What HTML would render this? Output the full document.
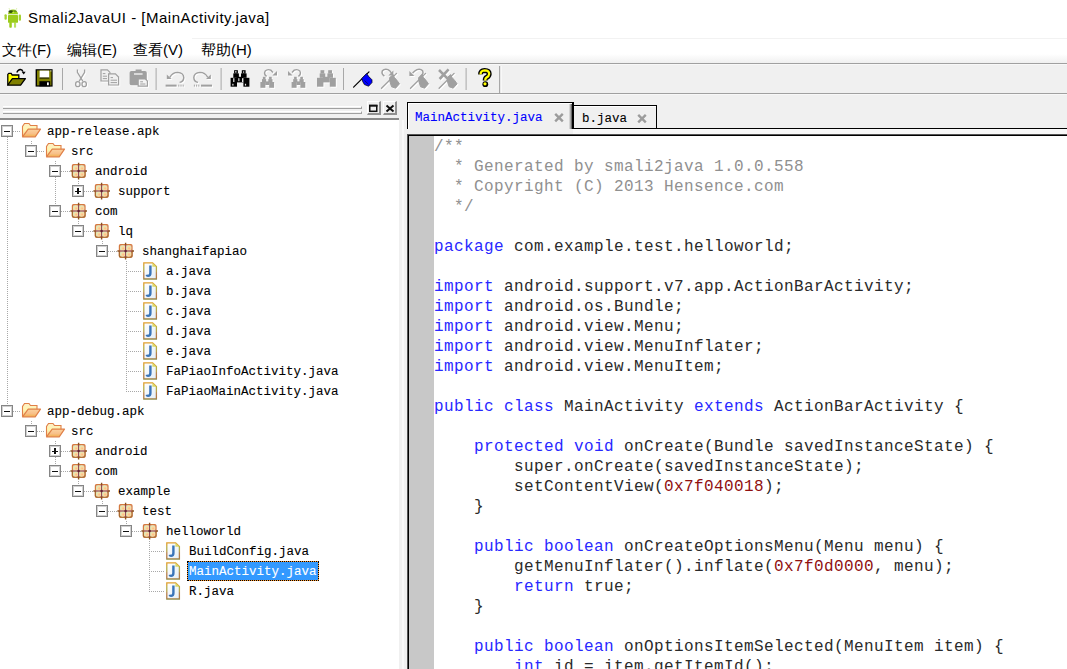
<!DOCTYPE html>
<html><head><meta charset="utf-8">
<style>
*{margin:0;padding:0;box-sizing:border-box}
html,body{width:1067px;height:669px;overflow:hidden;background:#fff;font-family:"Liberation Sans",sans-serif;position:relative}
.abs{position:absolute}
#title{left:0;top:0;width:1067px;height:38px;background:#fff}
#title .t{left:28px;top:9px;font-size:15px;letter-spacing:0.5px;color:#000;white-space:nowrap}
#menu{left:0;top:38px;width:1067px;height:25px;background:linear-gradient(to bottom,#fff 0,#fff 16px,#f3f3f3 23px,#f0f0f0 25px)}
#tline{left:192px;top:38px;width:875px;height:1px;background:#f2f2f2}
#menu span{position:absolute;top:3px;font-size:15px;color:#000;white-space:nowrap}
#tb{left:0;top:63px;width:1067px;height:31px;background:#f0f0f0;border-top:1px solid #a0a0a0;border-bottom:1px solid #a0a0a0}
#tb .wl{position:absolute;left:0;top:0;width:1067px;height:1px;background:#f8f8f8}
.sep{position:absolute;top:4px;width:1px;height:22px;background:#a0a0a0}
.tbi{position:absolute;top:5px}
#main{left:0;top:63px;width:1067px;height:606px;background:#f0f0f0}
#cap{left:0;top:94px;width:400px;height:24px}
.grip{position:absolute;left:3px;width:359px;height:3px;border-top:1px solid #fff;border-bottom:1px solid #a0a0a0;border-right:1px solid #a0a0a0}
.cbtn{position:absolute;top:7px;width:14px;height:14px;border-top:1px solid #fff;border-left:1px solid #fff;border-right:2px solid #909090;border-bottom:2px solid #909090}
#tree{left:0;top:118px;width:399px;height:551px;background:#fff;border-top:2px solid #8a8a8a}
#treein{position:absolute;left:0;top:0;width:400px;height:551px}
.vl{position:absolute;width:1px;background:repeating-linear-gradient(to bottom,#a8a8a8 0 1px,transparent 1px 2px)}
.hl{position:absolute;height:1px;background:repeating-linear-gradient(to right,#a8a8a8 0 1px,transparent 1px 2px)}
.bx{position:absolute;width:12px;height:12px;border:1px solid #858585;box-shadow:inset 0 0 0 1px #d0d0d0;background:#fff}
.bx .ph{position:absolute;left:2px;top:4.5px;width:6px;height:1.4px;background:#111}
.bx .pv{position:absolute;left:4.3px;top:2px;width:1.4px;height:6px;background:#111}
.ic{position:absolute}
.tx{position:absolute;height:19px;line-height:20px;font-family:"Liberation Mono",monospace;font-size:12.5px;letter-spacing:0px;-webkit-text-stroke:0.1px currentColor;color:#000;white-space:nowrap;padding:0 2px}
.tx.sel{background:#3399ff;color:#fff;margin-top:-1px;height:20px;line-height:22px;box-shadow:inset 0 0 0 1px #ff9a30;outline:1px dotted #000;outline-offset:-1px}
#split{left:402px;top:120px;width:2px;height:549px;background:#f8f8f8}
#tab1{left:407px;top:102px;width:167px;height:27px;z-index:2;background:#f0f0f0;border-left:1px solid #000;border-top:1px solid #000;border-right:2px solid #000;box-shadow:inset 1px 1px 0 #fff,inset -1px 0 0 #6a6a6a,inset -2px 0 0 #a8a8a8,inset -3px 0 0 #d4d4d4}
#tab2{left:572px;top:105px;width:85px;height:24px;background:#f0f0f0;border-top:1px solid #000;border-right:1px solid #000;box-shadow:inset 1px 1px 0 #fff}
#tabstrip2{left:573px;top:129px;width:494px;height:5px;background:#f8f8f8}
#tabline{left:572px;top:128px;width:495px;height:1px;background:#000}
.tabt{position:absolute;top:0;height:24px;line-height:24px;font-family:"Liberation Mono",monospace;font-size:12.5px;-webkit-text-stroke:0.1px currentColor;white-space:nowrap}
.tabx{position:absolute;width:10px;height:10px}
#editor{left:407px;top:134px;width:660px;height:535px;background:#fff;border-top:1px solid #555;border-left:1px solid #555;box-shadow:inset 1px 1px 0 #000}
#gutter{left:409px;top:136px;width:25px;height:533px;background:#c8c8c8}
#code{left:434px;top:137px;font-family:"Liberation Mono",monospace;font-size:16px;letter-spacing:0.4px;line-height:20px;white-space:pre;color:#2a2a2a}
.k{color:#2828ff}.c{color:#909090}.n{color:#901010}
</style></head><body>
<svg width="0" height="0" style="position:absolute">
<defs>
<linearGradient id="gfold" x1="0" y1="0" x2="0" y2="1"><stop offset="0" stop-color="#fbd2a0"/><stop offset="0.6" stop-color="#f8bf88"/><stop offset="1" stop-color="#f0b048"/></linearGradient>
<linearGradient id="gback" x1="0" y1="0" x2="0" y2="1"><stop offset="0" stop-color="#fdf0c8"/><stop offset="0.5" stop-color="#fff6b0"/><stop offset="1" stop-color="#f8c890"/></linearGradient>
<linearGradient id="gjb" x1="0" y1="0" x2="0" y2="1"><stop offset="0" stop-color="#e0a030"/><stop offset="0.12" stop-color="#d8a030"/><stop offset="0.3" stop-color="#b0b048"/><stop offset="0.55" stop-color="#b8a048"/><stop offset="0.62" stop-color="#b88050"/><stop offset="0.95" stop-color="#b07840"/><stop offset="1" stop-color="#909050"/></linearGradient>
<linearGradient id="gjf" x1="0" y1="0" x2="1" y2="1"><stop offset="0" stop-color="#ffffff"/><stop offset="1" stop-color="#e4eef6"/></linearGradient>
<radialGradient id="gdot" cx="0.6" cy="0.6"><stop offset="0" stop-color="#ffb880"/><stop offset="0.55" stop-color="#fcd8a0"/><stop offset="1" stop-color="#dcecb8"/></radialGradient>
<symbol id="ifold" viewBox="0 0 20 16">
  <path d="M1.5 14.5V4.5L3.5 1.5H8L9.5 3.5H16V8" fill="url(#gback)" stroke="#e08048" stroke-width="1.1"/>
  <path d="M1.5 14.8L7.2 7.2H19.5L14.2 14.8Z" fill="url(#gfold)" stroke="#e08048" stroke-width="1.2" stroke-linejoin="round"/>
</symbol>
<symbol id="ipkg" viewBox="0 0 18 18">
  <rect x="2.4" y="2.6" width="12.6" height="12.6" rx="1.2" fill="#e8b0a0" stroke="#d47a40" stroke-width="1.2"/>
  <path d="M2.4 9V14Q2.4 15.2 3.6 15.2H14Q15 15.2 15 14V9" fill="none" stroke="#a86a30" stroke-width="1.2"/>
  <circle cx="5.7" cy="5.9" r="2.7" fill="url(#gdot)"/>
  <circle cx="11.6" cy="5.9" r="2.7" fill="url(#gdot)"/>
  <circle cx="5.7" cy="12" r="2.7" fill="url(#gdot)"/>
  <circle cx="11.6" cy="12" r="2.7" fill="url(#gdot)"/>
  <path d="M8.6 0.8V3M8.6 15V17.4M0.4 9H2.6M14.8 9H17" stroke="#8a5020" stroke-width="1.4"/>
  <path d="M8.6 3V15M2.6 9H14.8" stroke="#8a4050" stroke-width="1"/>
  <circle cx="8.6" cy="9" r="1.2" fill="#602030"/>
</symbol>
<symbol id="ijava" viewBox="0 0 15 18">
  <path d="M0.8 0.8H9.6L13.4 4.6V17H0.8Z" fill="url(#gjf)" stroke="url(#gjb)" stroke-width="1.3"/>
  <path d="M9.4 0.8V4.8H13.4Z" fill="#d8d868"/>
  <path d="M7.4 3.4V11Q7.4 13.9 5 13.9Q3.9 13.9 3.6 12.8" fill="none" stroke="#3a74b8" stroke-width="2.4"/>
</symbol>
<symbol id="iandroid" viewBox="0 0 18 22">
  <path d="M5 1.2L5.9 2.8M12.8 1.2L11.9 2.8" stroke="#d4eaa0" stroke-width="0.9"/>
  <path d="M4 7.2A5 4.6 0 0 1 14 7.2Z" fill="#98cc18"/>
  <ellipse cx="6.8" cy="4.6" rx="2.4" ry="1.3" fill="#203a08" opacity="0.85"/>
  <ellipse cx="10.8" cy="4.2" rx="2" ry="0.9" fill="#507020" opacity="0.6"/>
  <circle cx="9.2" cy="5.3" r="0.9" fill="#c0f030"/>
  <rect x="4" y="7.6" width="10" height="0.5" fill="#d8ecb0"/>
  <rect x="4" y="8.1" width="10" height="7.6" rx="0.4" fill="#9ccc1c"/>
  <rect x="5.3" y="15" width="2.5" height="5.8" rx="0.8" fill="#9ccc1c"/>
  <rect x="10" y="15" width="2.1" height="5.8" rx="0.8" fill="#a8d83c" opacity="0.8"/>
  <rect x="0.5" y="7.2" width="2.3" height="5.6" rx="1.1" fill="#9ccc1c" opacity="0.9"/>
  <rect x="14.7" y="7.4" width="2.3" height="6.4" rx="1.1" fill="#9ccc1c" opacity="0.9"/>
</symbol>
</defs>
</svg>

<div id="title" class="abs">
  <svg class="abs" style="left:4px;top:7px" width="18" height="22"><use href="#iandroid"/></svg>
  <div class="t abs">Smali2JavaUI - [MainActivity.java]</div>
</div>
<div id="menu" class="abs">
  <span style="left:2px">文件(F)</span>
  <span style="left:67px">编辑(E)</span>
  <span style="left:133px">查看(V)</span>
  <span style="left:201px">帮助(H)</span>
</div>
<div id="main" class="abs"></div>
<div id="tline" class="abs"></div>
<div id="tb" class="abs"><div class="wl"></div></div>
<svg style="position:absolute;left:0;top:0" width="520" height="95" shape-rendering="auto">
<defs>
<g id="bino">
  <rect x="3.5" y="0" width="3.8" height="3.4"/>
  <rect x="11.2" y="0" width="3.8" height="3.4"/>
  <rect x="2.7" y="3.2" width="5.6" height="4.4"/>
  <rect x="10.4" y="3.2" width="5.6" height="4.4"/>
  <rect x="0" y="7.6" width="6.4" height="8.9"/>
  <rect x="12.8" y="7.6" width="6" height="8.9"/>
  <rect x="6" y="6.6" width="6.8" height="5.6"/>
</g>
<g id="binohl" fill="#fff" opacity="0.9">
  <rect x="4.4" y="1.1" width="1.6" height="1.2"/>
  <rect x="12.4" y="1.2" width="1.2" height="1.3"/>
  <rect x="2.6" y="8" width="1.2" height="3.8"/>
  <rect x="7.7" y="8" width="1.1" height="3"/>
  <rect x="11.4" y="8" width="1.2" height="3.8"/>
  <rect x="1.7" y="13.6" width="1.2" height="1.8"/>
  <rect x="14.3" y="13.6" width="1.2" height="1.8"/>
</g>
<g id="sbino">
  <rect x="2.5" y="0" width="2.6" height="2.5"/>
  <rect x="8.7" y="0" width="2.6" height="2.5"/>
  <rect x="1.6" y="2.3" width="4.2" height="3.2"/>
  <rect x="7.9" y="2.3" width="4.2" height="3.2"/>
  <rect x="0" y="5.2" width="5" height="5.8"/>
  <rect x="8.8" y="5.2" width="4.9" height="5.8"/>
  <rect x="4.8" y="4.6" width="4.2" height="3.6"/>
</g>
<g id="flag">
  <path d="M0.5 15.8L15.5 1" stroke-width="1.3" stroke-linecap="round" fill="none"/>
  <path d="M8.6 5.2L12.2 2.2L13.2 4.8L16.2 8.2L18.5 11.4L14.6 15.8L10.6 14.4L9 9.6Z"/>
</g>
</defs>
<!-- Open -->
<path d="M7.8 84.8V74.4L8.8 73.4H11.2L12.2 75H18.8V78.4" fill="#ffff00" stroke="#000" stroke-width="1.3"/>
<path d="M7.6 85.2L12.4 78.6H25.4L20.6 85.2Z" fill="#808000" stroke="#000" stroke-width="1.3" stroke-linejoin="round"/>
<path d="M16.8 72.6Q18 69.4 20.4 69.5Q22.4 69.8 23 71.6" fill="none" stroke="#000" stroke-width="1.3"/>
<path d="M21.6 71.8H25.6L23.8 74.6Z" fill="#000"/>
<!-- Save -->
<rect x="35.6" y="69.2" width="17" height="17.4" fill="#000"/>
<rect x="37" y="70.4" width="14.4" height="15" fill="#808000"/>
<rect x="39.6" y="70.6" width="9.6" height="7" fill="#fff"/>
<rect x="39.6" y="77.6" width="9.6" height="0.9" fill="#000"/>
<rect x="39.4" y="81.2" width="10.8" height="5.2" fill="#000"/>
<rect x="47" y="82.4" width="1.8" height="2.8" fill="#fff"/>
<rect x="50.4" y="70.4" width="1" height="1" fill="#fff"/>
<!-- separators -->
<g fill="#a8a8a8">
<rect x="62" y="68" width="1" height="22"/>
<rect x="155.6" y="68" width="1" height="22"/>
<rect x="220.6" y="68" width="1" height="22"/>
<rect x="343" y="68" width="1" height="22"/>
<rect x="465.6" y="68" width="1" height="22"/>
<rect x="499" y="66" width="1.4" height="27"/>
</g>
<rect x="500.5" y="66" width="1" height="27" fill="#fff"/>
<!-- disabled gray icons: white emboss offset -->
<defs><g id="dis">
<!-- Cut -->
<g fill="none" stroke-width="1.3">
<path d="M77.4 69.4V72.4L82.8 81.2M84.6 69.4V72.4L79.2 81.2" />
<ellipse cx="77.8" cy="84.2" rx="2.2" ry="2.5"/>
<ellipse cx="84.2" cy="84.2" rx="2.2" ry="2.5"/>
</g>
<!-- Copy -->
<g fill="#f0f0f0" stroke-width="1.2">
<path d="M101 69.8H107.4L110 72.4V81H101Z"/>
<path d="M108.6 73.8H115.4L118.6 77V85H108.6Z"/>
</g>
<g stroke-width="1">
<path d="M102.8 73.6H105.4M102.8 76.2H107M102.8 78.6H107M110.6 77.6H113M110.6 80.2H117M110.6 82.6H117"/>
</g>
<!-- Paste -->
<path d="M129.6 72.8Q129.6 71 131.4 71H135.6V69.4H141.6V71H145Q146.8 71 146.8 72.8V85.2H131.4Q129.6 85.2 129.6 83.4Z" stroke="none"/>
<path d="M137.6 78.2H145.4L148 80.8V86.8H137.6Z" stroke="none"/>
<path d="M138.8 79.4H145L146.8 81.2V85.6H138.8Z" fill="#f4f4f4" stroke="none"/>
<path d="M140.2 81.8H143M140.2 84H145.4" stroke-width="1"/>
<rect x="134" y="73.4" width="8.6" height="1.2" fill="#fff" stroke="none"/>
<!-- Undo -->
<path d="M169.8 77.4Q172.6 72.4 177.6 72.4Q183.6 72.8 183.8 77.6Q183.6 81.6 179.6 82.4" fill="none" stroke-width="1.4"/>
<path d="M166.8 74.4V79H171.6Z" stroke="none"/>
<rect x="165.6" y="84.6" width="11" height="2" stroke="none"/>
<path d="M178.8 84.6V86.6M181 84.6V86.6M183.2 84.6V86.6" stroke-width="0.9"/>
<!-- Redo -->
<path d="M207.8 77.4Q205 72.4 200 72.4Q194 72.8 193.8 77.6Q194 81.6 198 82.4" fill="none" stroke-width="1.4"/>
<path d="M210.8 74.4V79H206Z" stroke="none"/>
<rect x="201" y="84.6" width="11" height="2" stroke="none"/>
<path d="M194.4 84.6V86.6M196.6 84.6V86.6M198.8 84.6V86.6" stroke-width="0.9"/>
<!-- find next -->
<use href="#sbino" x="260.4" y="76.8" stroke="none"/>
<path d="M266.6 76.4Q263.4 74 265.2 71Q267.6 68.8 270.8 70.2L273 72.4" fill="none" stroke-width="1.4"/>
<path d="M277 71V75.6H272.4Z" stroke="none"/>
<!-- find prev -->
<use href="#sbino" x="291.6" y="76.8" stroke="none"/>
<path d="M298.4 76.4Q301.6 74 299.8 71Q297.4 68.8 294.2 70.2L292 72.4" fill="none" stroke-width="1.4"/>
<path d="M288 71V75.6H292.6Z" stroke="none"/>
<!-- replace binoculars -->
<use href="#bino" x="317" y="70.2" stroke="none"/>
<!-- bookmark next -->
<use href="#flag" x="381" y="72.4"/>
<path d="M384.4 76.2Q381 73.6 382.4 70.8Q384.4 68.6 388 69.6Q390.2 70.6 391.4 73" fill="none" stroke-width="1.5"/>
<path d="M393.4 70.6V75.6H388.4Z" stroke="none"/>
<!-- bookmark prev -->
<use href="#flag" x="410" y="72.4"/>
<path d="M420.6 76.2Q424 73.6 422.6 70.8Q420.6 68.6 417 69.6Q414.8 70.6 412.6 73" fill="none" stroke-width="1.5"/>
<path d="M409.4 71V76H414.4Z" stroke="none"/>
<!-- clear bookmarks -->
<use href="#flag" x="438.6" y="72.4"/>
<path d="M439 70L449.6 80.6M448.6 69.4L439.6 79" fill="none" stroke-width="2.6"/>
</g></defs>
<use href="#dis" x="1" y="1" fill="#ffffff" stroke="#ffffff"/>
<use href="#dis" fill="#a0a0a0" stroke="#a0a0a0"/>
<!-- find (black binoculars) -->
<use href="#bino" x="230.6" y="70.2" fill="#000"/>
<use href="#binohl" x="230.6" y="70.2"/>
<!-- toggle bookmark blue flag -->
<path d="M353.6 87.2L369 71.8" stroke="#000" stroke-width="1.2" stroke-linecap="round"/>
<path d="M361.8 78.4L366.6 73.6L368.8 76.6L372 79.8V82.6L368.6 86.2L364.4 84.6L362.6 81.4Z" fill="#0000ff" stroke="#000" stroke-width="0.7"/>
<path d="M364.6 80.6L368.4 84.2" stroke="#000060" stroke-width="0.8"/>
<!-- help -->
<path d="M480.6 74.4Q480.4 70.6 484.6 70.4Q489.2 70.4 489.2 74Q489 76.4 486.4 77.6Q485.2 78.2 485.2 80.6" fill="none" stroke="#000" stroke-width="5"/>
<path d="M480.6 74.4Q480.4 70.6 484.6 70.4Q489.2 70.4 489.2 74Q489 76.4 486.4 77.6Q485.2 78.2 485.2 80.6" fill="none" stroke="#ffff00" stroke-width="2.3"/>
<circle cx="485.3" cy="84.2" r="2.9" fill="#000"/>
<circle cx="485" cy="83.8" r="1.6" fill="#ffff00"/>
</svg>

<div id="cap" class="abs">
  <div class="grip" style="top:12px"></div>
  <div class="grip" style="top:17px"></div>
  <div style="position:absolute;left:0;top:0;width:1067px;height:1px;background:#f8f8f8"></div>
  <div class="cbtn" style="left:367px"><svg style="position:absolute;left:1px;top:2px" width="10" height="10"><rect x="0.75" y="1.5" width="7" height="5.8" fill="none" stroke="#111" stroke-width="1.5"/><rect x="0" y="0.8" width="8.5" height="1.8" fill="#111"/></svg></div>
  <div class="cbtn" style="left:383px"><svg style="position:absolute;left:1px;top:2px" width="10" height="9"><path d="M1.5 1.5L8.5 7.5M8.5 1.5L1.5 7.5" stroke="#111" stroke-width="2"/></svg></div>
</div>
<div id="tree" class="abs"><div id="treein">
<div class="vl" style="left:7px;top:11px;height:10px"></div>
<div class="vl" style="left:7px;top:21px;height:260px"></div>
<div class="hl" style="left:13px;top:11px;width:8px"></div>
<div class="bx" style="left:1px;top:5px"><i class="ph"></i></div>
<svg class="ic" style="left:21px;top:2px" width="20" height="16"><use href="#ifold"/></svg>
<div class="tx" style="left:45px;top:2px">app-release.apk</div>
<div class="vl" style="left:31px;top:21px;height:10px"></div>
<div class="hl" style="left:37px;top:31px;width:8px"></div>
<div class="bx" style="left:25px;top:25px"><i class="ph"></i></div>
<svg class="ic" style="left:45px;top:22px" width="20" height="16"><use href="#ifold"/></svg>
<div class="tx" style="left:69px;top:22px">src</div>
<div class="vl" style="left:55px;top:41px;height:20px"></div>
<div class="vl" style="left:55px;top:61px;height:20px"></div>
<div class="hl" style="left:61px;top:51px;width:9px"></div>
<div class="bx" style="left:49px;top:45px"><i class="ph"></i></div>
<svg class="ic" style="left:70px;top:42px" width="18" height="18"><use href="#ipkg"/></svg>
<div class="tx" style="left:93px;top:42px">android</div>
<div class="vl" style="left:78px;top:61px;height:10px"></div>
<div class="hl" style="left:84px;top:71px;width:9px"></div>
<div class="bx" style="left:72px;top:65px"><i class="ph"></i><i class="pv"></i></div>
<svg class="ic" style="left:93px;top:62px" width="18" height="18"><use href="#ipkg"/></svg>
<div class="tx" style="left:116px;top:62px">support</div>
<div class="vl" style="left:55px;top:81px;height:10px"></div>
<div class="hl" style="left:61px;top:91px;width:9px"></div>
<div class="bx" style="left:49px;top:85px"><i class="ph"></i></div>
<svg class="ic" style="left:70px;top:82px" width="18" height="18"><use href="#ipkg"/></svg>
<div class="tx" style="left:93px;top:82px">com</div>
<div class="vl" style="left:78px;top:101px;height:10px"></div>
<div class="hl" style="left:84px;top:111px;width:9px"></div>
<div class="bx" style="left:72px;top:105px"><i class="ph"></i></div>
<svg class="ic" style="left:93px;top:102px" width="18" height="18"><use href="#ipkg"/></svg>
<div class="tx" style="left:116px;top:102px">lq</div>
<div class="vl" style="left:102px;top:121px;height:10px"></div>
<div class="hl" style="left:108px;top:131px;width:9px"></div>
<div class="bx" style="left:96px;top:125px"><i class="ph"></i></div>
<svg class="ic" style="left:117px;top:122px" width="18" height="18"><use href="#ipkg"/></svg>
<div class="tx" style="left:140px;top:122px">shanghaifapiao</div>
<div class="vl" style="left:126px;top:141px;height:20px"></div>
<div class="hl" style="left:126px;top:151px;width:15px"></div>
<svg class="ic" style="left:143px;top:142px" width="15" height="18"><use href="#ijava"/></svg>
<div class="tx" style="left:164px;top:142px">a.java</div>
<div class="vl" style="left:126px;top:161px;height:20px"></div>
<div class="hl" style="left:126px;top:171px;width:15px"></div>
<svg class="ic" style="left:143px;top:162px" width="15" height="18"><use href="#ijava"/></svg>
<div class="tx" style="left:164px;top:162px">b.java</div>
<div class="vl" style="left:126px;top:181px;height:20px"></div>
<div class="hl" style="left:126px;top:191px;width:15px"></div>
<svg class="ic" style="left:143px;top:182px" width="15" height="18"><use href="#ijava"/></svg>
<div class="tx" style="left:164px;top:182px">c.java</div>
<div class="vl" style="left:126px;top:201px;height:20px"></div>
<div class="hl" style="left:126px;top:211px;width:15px"></div>
<svg class="ic" style="left:143px;top:202px" width="15" height="18"><use href="#ijava"/></svg>
<div class="tx" style="left:164px;top:202px">d.java</div>
<div class="vl" style="left:126px;top:221px;height:20px"></div>
<div class="hl" style="left:126px;top:231px;width:15px"></div>
<svg class="ic" style="left:143px;top:222px" width="15" height="18"><use href="#ijava"/></svg>
<div class="tx" style="left:164px;top:222px">e.java</div>
<div class="vl" style="left:126px;top:241px;height:20px"></div>
<div class="hl" style="left:126px;top:251px;width:15px"></div>
<svg class="ic" style="left:143px;top:242px" width="15" height="18"><use href="#ijava"/></svg>
<div class="tx" style="left:164px;top:242px">FaPiaoInfoActivity.java</div>
<div class="vl" style="left:126px;top:261px;height:10px"></div>
<div class="hl" style="left:126px;top:271px;width:15px"></div>
<svg class="ic" style="left:143px;top:262px" width="15" height="18"><use href="#ijava"/></svg>
<div class="tx" style="left:164px;top:262px">FaPiaoMainActivity.java</div>
<div class="vl" style="left:7px;top:281px;height:10px"></div>
<div class="hl" style="left:13px;top:291px;width:8px"></div>
<div class="bx" style="left:1px;top:285px"><i class="ph"></i></div>
<svg class="ic" style="left:21px;top:282px" width="20" height="16"><use href="#ifold"/></svg>
<div class="tx" style="left:45px;top:282px">app-debug.apk</div>
<div class="vl" style="left:31px;top:301px;height:10px"></div>
<div class="hl" style="left:37px;top:311px;width:8px"></div>
<div class="bx" style="left:25px;top:305px"><i class="ph"></i></div>
<svg class="ic" style="left:45px;top:302px" width="20" height="16"><use href="#ifold"/></svg>
<div class="tx" style="left:69px;top:302px">src</div>
<div class="vl" style="left:55px;top:321px;height:20px"></div>
<div class="hl" style="left:61px;top:331px;width:9px"></div>
<div class="bx" style="left:49px;top:325px"><i class="ph"></i><i class="pv"></i></div>
<svg class="ic" style="left:70px;top:322px" width="18" height="18"><use href="#ipkg"/></svg>
<div class="tx" style="left:93px;top:322px">android</div>
<div class="vl" style="left:55px;top:341px;height:10px"></div>
<div class="hl" style="left:61px;top:351px;width:9px"></div>
<div class="bx" style="left:49px;top:345px"><i class="ph"></i></div>
<svg class="ic" style="left:70px;top:342px" width="18" height="18"><use href="#ipkg"/></svg>
<div class="tx" style="left:93px;top:342px">com</div>
<div class="vl" style="left:78px;top:361px;height:10px"></div>
<div class="hl" style="left:84px;top:371px;width:9px"></div>
<div class="bx" style="left:72px;top:365px"><i class="ph"></i></div>
<svg class="ic" style="left:93px;top:362px" width="18" height="18"><use href="#ipkg"/></svg>
<div class="tx" style="left:116px;top:362px">example</div>
<div class="vl" style="left:102px;top:381px;height:10px"></div>
<div class="hl" style="left:108px;top:391px;width:9px"></div>
<div class="bx" style="left:96px;top:385px"><i class="ph"></i></div>
<svg class="ic" style="left:117px;top:382px" width="18" height="18"><use href="#ipkg"/></svg>
<div class="tx" style="left:140px;top:382px">test</div>
<div class="vl" style="left:126px;top:401px;height:10px"></div>
<div class="hl" style="left:132px;top:411px;width:9px"></div>
<div class="bx" style="left:120px;top:405px"><i class="ph"></i></div>
<svg class="ic" style="left:141px;top:402px" width="18" height="18"><use href="#ipkg"/></svg>
<div class="tx" style="left:164px;top:402px">helloworld</div>
<div class="vl" style="left:149px;top:421px;height:20px"></div>
<div class="hl" style="left:149px;top:431px;width:15px"></div>
<svg class="ic" style="left:166px;top:422px" width="15" height="18"><use href="#ijava"/></svg>
<div class="tx" style="left:187px;top:422px">BuildConfig.java</div>
<div class="vl" style="left:149px;top:441px;height:20px"></div>
<div class="hl" style="left:149px;top:451px;width:15px"></div>
<svg class="ic" style="left:166px;top:442px" width="15" height="18"><use href="#ijava"/></svg>
<div class="tx sel" style="left:187px;top:442px">MainActivity.java</div>
<div class="vl" style="left:149px;top:461px;height:10px"></div>
<div class="hl" style="left:149px;top:471px;width:15px"></div>
<svg class="ic" style="left:166px;top:462px" width="15" height="18"><use href="#ijava"/></svg>
<div class="tx" style="left:187px;top:462px">R.java</div>
</div></div>
<div id="split" class="abs"></div>
<div id="tab1" class="abs">
  <div class="tabt" style="left:7px;top:3px;color:#0000ff">MainActivity.java</div>
  <svg class="tabx" style="left:146px;top:10px"><path d="M1.2 0.9L8.8 8.4M8.8 0.9L1.2 8.4" stroke="#9c9c9c" stroke-width="2.4"/></svg>
</div>
<div id="tab2" class="abs">
  <div class="tabt" style="left:10px;top:1px;color:#000">b.java</div>
  <svg class="tabx" style="left:65px;top:8px"><path d="M1.2 0.9L8.8 8.4M8.8 0.9L1.2 8.4" stroke="#9c9c9c" stroke-width="2.4"/></svg>
</div>
<div id="tabline" class="abs"></div>
<div id="tabstrip2" class="abs"></div>
<div id="editor" class="abs"></div>
<div id="gutter" class="abs"></div>
<div id="code" class="abs"><span class="c">/**
  * Generated by smali2java 1.0.0.558
  * Copyright (C) 2013 Hensence.com
  */</span>

<span class="k">package</span> com.example.test.helloworld;

<span class="k">import</span> android.support.v7.app.ActionBarActivity;
<span class="k">import</span> android.os.Bundle;
<span class="k">import</span> android.view.Menu;
<span class="k">import</span> android.view.MenuInflater;
<span class="k">import</span> android.view.MenuItem;

<span class="k">public</span> <span class="k">class</span> MainActivity <span class="k">extends</span> ActionBarActivity {

    <span class="k">protected</span> <span class="k">void</span> onCreate(Bundle savedInstanceState) {
        super.onCreate(savedInstanceState);
        setContentView(<span class="n">0x7f040018</span>);
    }

    <span class="k">public</span> <span class="k">boolean</span> onCreateOptionsMenu(Menu menu) {
        getMenuInflater().inflate(<span class="n">0x7f0d0000</span>, menu);
        <span class="k">return</span> true;
    }

    <span class="k">public</span> <span class="k">boolean</span> onOptionsItemSelected(MenuItem item) {
        <span class="k">int</span> id = item.getItemId();</div>
</body></html>
